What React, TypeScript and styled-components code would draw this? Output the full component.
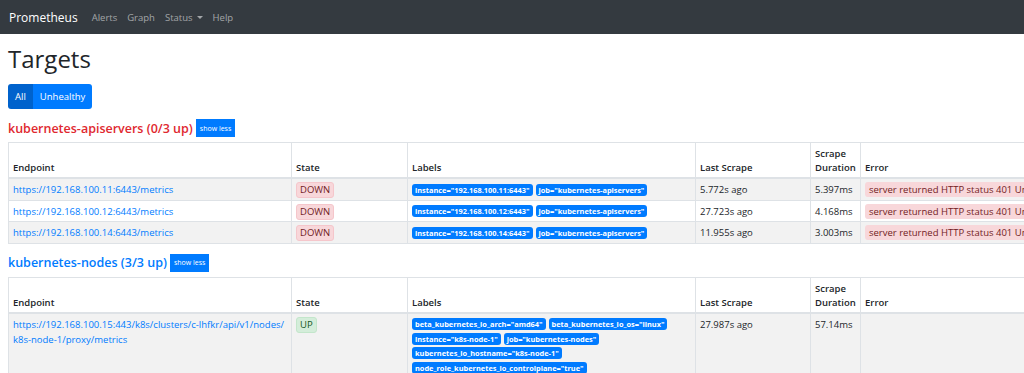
import React from 'react'
import styled, {createGlobalStyle} from 'styled-components'

const GlobalStyle = createGlobalStyle`
  body {
    margin: 0;
    font-family: "Open Sans", "Liberation Sans", sans-serif;
    font-size: 9.5px;
    color: #212529;
    background: #fff;
    overflow-x: hidden;
  }
`

const Navbar = styled.nav`
  height: 34px;
  background: #343a40;
  display: flex;
  align-items: center;
  padding: 0 9px;
`

const Brand = styled.span`
  color: #fff;
  font-size: 12px;
  margin-right: 9px;
`

const NavLink = styled.span`
  color: rgba(255, 255, 255, 0.55);
  font-size: 9.5px;
  padding: 0 5px;
  display: flex;
  align-items: center;
`

const Caret = styled.span`
  display: inline-block;
  margin-left: 4px;
  border-top: 3.5px solid rgba(255, 255, 255, 0.55);
  border-left: 3px solid transparent;
  border-right: 3px solid transparent;
`

const Container = styled.main`
  padding: 0 8px;
`

const Title = styled.h1`
  font-size: 24px;
  font-weight: 500;
  line-height: 29px;
  margin: 10px 0 11px;
`

const ButtonGroup = styled.div`
  display: inline-flex;
  border-radius: 3px;
  overflow: hidden;
`

const GroupButton = styled.button<{ active?: boolean }>`
  border: none;
  height: 25px;
  padding: 0 7px;
  font-family: inherit;
  font-size: 9.5px;
  color: #fff;
  background: ${p => p.active ? '#0062cc' : '#007bff'};
`

const PoolHeader = styled.div`
  display: flex;
  align-items: center;
  gap: 3px;
  margin: 10px 0 5px;
`

const PoolName = styled.span<{ healthy: boolean }>`
  font-size: 12.5px;
  font-weight: 600;
  color: ${p => p.healthy ? '#007bff' : '#e0282f'};
`

const ShowLess = styled.button`
  border: none;
  height: 18px;
  padding: 0 4px;
  font-family: inherit;
  font-size: 7px;
  color: #fff;
  background: #007bff;
`

const Table = styled.table`
  table-layout: fixed;
  width: 1252px;
  border-collapse: collapse;
  margin-bottom: 0;

  th, td {
    border: 1px solid #dee2e6;
    padding: 3px 4px 1.5px;
    text-align: left;
    vertical-align: top;
  }

  th {
    vertical-align: bottom;
    font-weight: 600;
    line-height: 14px;
    padding: 4px 4px 2px;
    border-bottom-width: 2px;
  }

  tbody tr:nth-child(odd) {
    background: #f2f2f2;
  }
`

const Link = styled.a`
  color: #007bff;
  text-decoration: none;
  line-height: 15px;
  display: block;
`

const StateBadge = styled.span<{ up: boolean }>`
  display: inline-block;
  padding: 0 3px;
  line-height: 14px;
  border-radius: 3px;
  border: 1px solid ${p => p.up ? '#c3e6cb' : '#f5c6cb'};
  background: ${p => p.up ? '#d4edda' : '#f8d7da'};
  color: ${p => p.up ? '#155724' : '#721c24'};
`

const Labels = styled.div`
  display: flex;
  flex-wrap: wrap;
  gap: 2.5px 3px;
  padding: 1.5px 0 0;
`

const LabelBadge = styled.span`
  background: #007bff;
  color: #fff;
  font-size: 7.4px;
  font-weight: 700;
  line-height: 12px;
  padding: 0 3px;
  border-radius: 3px;
  white-space: nowrap;
`

const Cell = styled.span`
  line-height: 15px;
`

const ErrorBadge = styled.span`
  display: inline-block;
  white-space: nowrap;
  padding: 0 4px;
  line-height: 15px;
  border-radius: 3px;
  background: #f8d7da;
  color: #721c24;
`

type Target = {
  endpoint: string
  up: boolean
  labels: string[]
  lastScrape: string
  duration: string
  error?: string
}

const unauthorized = 'server returned HTTP status 401 Unauthorized'

const apiservers: Target[] = [
  {endpoint: 'https://192.168.100.11:6443/metrics', up: false, labels: ['instance="192.168.100.11:6443"', 'job="kubernetes-apiservers"'], lastScrape: '5.772s ago', duration: '5.397ms', error: unauthorized},
  {endpoint: 'https://192.168.100.12:6443/metrics', up: false, labels: ['instance="192.168.100.12:6443"', 'job="kubernetes-apiservers"'], lastScrape: '27.723s ago', duration: '4.168ms', error: unauthorized},
  {endpoint: 'https://192.168.100.14:6443/metrics', up: false, labels: ['instance="192.168.100.14:6443"', 'job="kubernetes-apiservers"'], lastScrape: '11.955s ago', duration: '3.003ms', error: unauthorized},
]

const node = (n: number, scrape: string, duration: string): Target => ({
  endpoint: `https://192.168.100.15:443/k8s/clusters/c-lhfkr/api/v1/nodes/k8s-node-${n}/proxy/metrics`,
  up: true,
  labels: [
    'beta_kubernetes_io_arch="amd64"',
    'beta_kubernetes_io_os="linux"',
    `instance="k8s-node-${n}"`,
    'job="kubernetes-nodes"',
    `kubernetes_io_hostname="k8s-node-${n}"`,
    'node_role_kubernetes_io_controlplane="true"',
    'node_role_kubernetes_io_etcd="true"',
  ],
  lastScrape: scrape,
  duration,
})

const nodes: Target[] = [
  node(1, '27.987s ago', '57.14ms'),
  node(2, '12.410s ago', '48.52ms'),
  node(3, '3.205s ago', '61.07ms'),
]

// break long endpoints after "nodes/" like the real page does
const wrapEndpoint = (url: string) => url.replace('nodes/k8s', 'nodes/\u200bk8s')

const Pool = ({name, targets}: { name: string, targets: Target[] }) => {
  const upCount = targets.filter(t => t.up).length
  return (
    <section>
      <PoolHeader>
        <PoolName healthy={upCount === targets.length}>{name} ({upCount}/{targets.length} up)</PoolName>
        <ShowLess>show less</ShowLess>
      </PoolHeader>
      <Table>
        <colgroup>
          <col style={{width: 283}}/>
          <col style={{width: 116}}/>
          <col style={{width: 288}}/>
          <col style={{width: 115}}/>
          <col style={{width: 50}}/>
          <col/>
        </colgroup>
        <thead>
          <tr>
            <th>Endpoint</th>
            <th>State</th>
            <th>Labels</th>
            <th>Last Scrape</th>
            <th>Scrape Duration</th>
            <th>Error</th>
          </tr>
        </thead>
        <tbody>
          {targets.map(t => (
            <tr key={t.endpoint}>
              <td><Link href="#">{wrapEndpoint(t.endpoint)}</Link></td>
              <td><StateBadge up={t.up}>{t.up ? 'UP' : 'DOWN'}</StateBadge></td>
              <td>
                <Labels>
                  {t.labels.map(l => <LabelBadge key={l}>{l}</LabelBadge>)}
                </Labels>
              </td>
              <td><Cell>{t.lastScrape}</Cell></td>
              <td><Cell>{t.duration}</Cell></td>
              <td>{t.error && <ErrorBadge>{t.error}</ErrorBadge>}</td>
            </tr>
          ))}
        </tbody>
      </Table>
    </section>
  )
}

export default function App() {
  return (
    <>
      <GlobalStyle/>
      <Navbar>
        <Brand>Prometheus</Brand>
        <NavLink>Alerts</NavLink>
        <NavLink>Graph</NavLink>
        <NavLink>Status<Caret/></NavLink>
        <NavLink>Help</NavLink>
      </Navbar>
      <Container>
        <Title>Targets</Title>
        <ButtonGroup>
          <GroupButton active>All</GroupButton>
          <GroupButton>Unhealthy</GroupButton>
        </ButtonGroup>
        <Pool name="kubernetes-apiservers" targets={apiservers}/>
        <Pool name="kubernetes-nodes" targets={nodes}/>
      </Container>
    </>
  )
}
